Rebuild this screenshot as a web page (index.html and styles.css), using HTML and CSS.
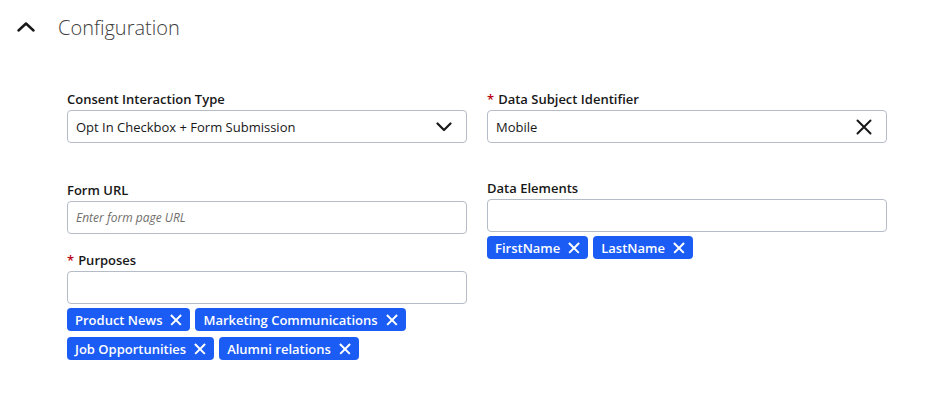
FILE: index.html
```html
<!DOCTYPE html>
<html lang="en">
  <head>
    <meta charset="utf-8">
    <title>Configuration</title>
    <link rel="stylesheet" href="styles.css">
  </head>
<body>

	<header class="section-head">
		<svg class="toggle" width="18" height="10" viewBox="0 0 18 10">
			<path d="M1.5 8.5 L9 1.5 L16.5 8.5" fill="none" stroke="#181818" stroke-width="2.4" stroke-linecap="round" stroke-linejoin="round"/>
		</svg>
		<h2>Configuration</h2>
	</header>

	<div class="form-grid">
		<!-- left column -->
		<div class="col">
			<div class="field">
				<label class="field-label">Consent Interaction Type</label>
				<div class="input">
					<span class="value">Opt In Checkbox + Form Submission</span>
					<svg class="icon" width="16" height="10" viewBox="0 0 16 10">
						<path d="M1.5 1.5 L8 8 L14.5 1.5" fill="none" stroke="#181818" stroke-width="2.2" stroke-linecap="round" stroke-linejoin="round"/>
					</svg>
				</div>
			</div>
			<div class="field field-url">
				<label class="field-label">Form URL</label>
				<div class="input">
					<span class="placeholder">Enter form page URL</span>
				</div>
			</div>
			<div class="field field-purposes">
				<label class="field-label"><abbr>*</abbr>Purposes</label>
				<div class="input"></div>
				<div class="pills">
					<span class="pill">Product News<i class="x"></i></span>
					<span class="pill">Marketing Communications<i class="x"></i></span>
					<span class="pill">Job Opportunities<i class="x"></i></span>
					<span class="pill">Alumni relations<i class="x"></i></span>
				</div>
			</div>
		</div>

		<!-- right column -->
		<div class="col">
			<div class="field">
				<label class="field-label"><abbr>*</abbr>Data Subject Identifier</label>
				<div class="input">
					<span class="value">Mobile</span>
					<svg class="icon" width="16" height="16" viewBox="0 0 16 16">
						<path d="M1.5 1.5 L14.5 14.5 M14.5 1.5 L1.5 14.5" fill="none" stroke="#181818" stroke-width="2" stroke-linecap="round"/>
					</svg>
				</div>
			</div>
			<div class="field field-elements">
				<label class="field-label">Data Elements</label>
				<div class="input"></div>
				<div class="pills">
					<span class="pill">FirstName<i class="x"></i></span>
					<span class="pill">LastName<i class="x"></i></span>
				</div>
			</div>
		</div>
	</div>

</body>
</html>
```

FILE: styles.css
```css
* {
    padding: 0;
    margin: 0;
    box-sizing: border-box;
    font-family: "Open Sans", "Noto Sans", sans-serif;
}
body {
    background: #fff;
    color: #181818;
}

.section-head {
    display: flex;
    align-items: center;
    height: 54px;
    padding-left: 17px;
}
.section-head .toggle {
    margin-right: 23px;
    margin-top: -1px;
}
.section-head h2 {
    font-size: 20px;
    font-weight: 300;
    color: #3e3e3c;
}

.form-grid {
    display: flex;
    gap: 20px;
    padding-left: 67px;
    padding-top: 36px;
}
.col {
    width: 400px;
    display: flex;
    flex-direction: column;
}

.field-label {
    display: block;
    font-size: 13px;
    font-weight: 600;
    line-height: 19px;
    margin-bottom: 1px;
    color: #181818;
}
.field-label abbr {
    color: #ba0517;
    text-decoration: none;
    margin-right: 4px;
}

.input {
    display: flex;
    align-items: center;
    justify-content: space-between;
    height: 33px;
    border: 1px solid #b5bcc7;
    border-radius: 4px;
    padding: 0 14px 0 8px;
    font-size: 13px;
}
.input .placeholder {
    font-style: italic;
    color: #706e6b;
    font-size: 12px;
}

.field-url {
    margin-top: 38px;
}
.field-purposes {
    margin-top: 17px;
}
.field-elements {
    margin-top: 36px;
}

.pills {
    display: flex;
    flex-wrap: wrap;
    gap: 6px 5px;
    margin-top: 4px;
}
.pill {
    display: inline-flex;
    align-items: center;
    height: 23px;
    padding: 0 8px;
    border-radius: 4px;
    background: #1b5cf5;
    color: #fff;
    font-size: 13px;
    font-weight: 600;
}
.pill .x {
    position: relative;
    width: 12px;
    height: 12px;
    margin-left: 8px;
}
.pill .x::before,
.pill .x::after {
    content: "";
    position: absolute;
    left: -1px;
    top: 5px;
    width: 14px;
    height: 1.6px;
    background: #fff;
    transform: rotate(45deg);
}
.pill .x::after {
    transform: rotate(-45deg);
}
```
